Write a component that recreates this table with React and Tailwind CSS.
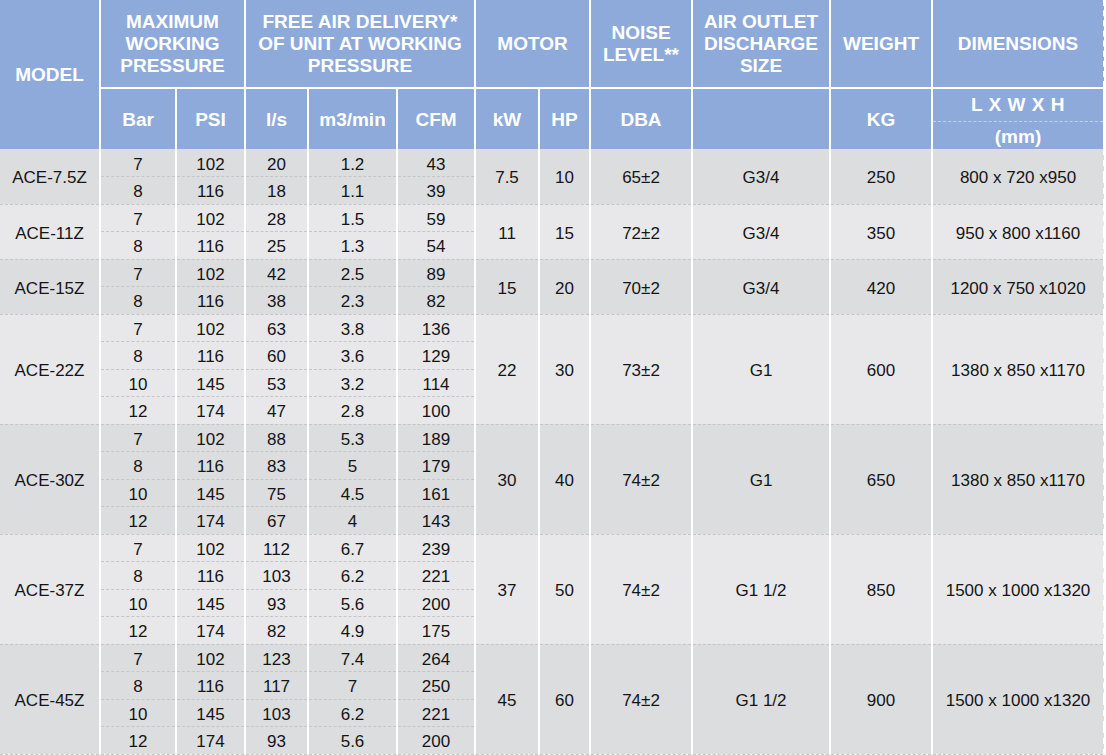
const groups = [
  { model: 'ACE-7.5Z', rows: [[7, 102, 20, '1.2', 43], [8, 116, 18, '1.1', 39]], kw: '7.5', hp: 10, dba: '65±2', size: 'G3/4', kg: 250, dim: '800 x 720 x950' },
  { model: 'ACE-11Z', rows: [[7, 102, 28, '1.5', 59], [8, 116, 25, '1.3', 54]], kw: 11, hp: 15, dba: '72±2', size: 'G3/4', kg: 350, dim: '950 x 800 x1160' },
  { model: 'ACE-15Z', rows: [[7, 102, 42, '2.5', 89], [8, 116, 38, '2.3', 82]], kw: 15, hp: 20, dba: '70±2', size: 'G3/4', kg: 420, dim: '1200 x 750 x1020' },
  { model: 'ACE-22Z', rows: [[7, 102, 63, '3.8', 136], [8, 116, 60, '3.6', 129], [10, 145, 53, '3.2', 114], [12, 174, 47, '2.8', 100]], kw: 22, hp: 30, dba: '73±2', size: 'G1', kg: 600, dim: '1380 x 850 x1170' },
  { model: 'ACE-30Z', rows: [[7, 102, 88, '5.3', 189], [8, 116, 83, '5', 179], [10, 145, 75, '4.5', 161], [12, 174, 67, '4', 143]], kw: 30, hp: 40, dba: '74±2', size: 'G1', kg: 650, dim: '1380 x 850 x1170' },
  { model: 'ACE-37Z', rows: [[7, 102, 112, '6.7', 239], [8, 116, 103, '6.2', 221], [10, 145, 93, '5.6', 200], [12, 174, 82, '4.9', 175]], kw: 37, hp: 50, dba: '74±2', size: 'G1 1/2', kg: 850, dim: '1500 x 1000 x1320' },
  { model: 'ACE-45Z', rows: [[7, 102, 123, '7.4', 264], [8, 116, 117, '7', 250], [10, 145, 103, '6.2', 221], [12, 174, 93, '5.6', 200]], kw: 45, hp: 60, dba: '74±2', size: 'G1 1/2', kg: 900, dim: '1500 x 1000 x1320' },
];

const widths = [100, 76, 69, 63, 89, 78, 64, 51, 102, 138, 102, 172];

const th = 'bg-[#8eaadb] text-white font-bold text-[19px] leading-[22px] text-center align-middle p-0 border-r-2 border-r-white';
const td = 'p-0 pt-[3px] text-center align-middle border-r-2 border-r-white border-b border-b-[#c6c6c6] [border-bottom-style:dashed]';

export default function App() {
  return (
    <div className="bg-white w-[1106px] h-[755px] overflow-hidden font-['Liberation_Sans',Arial,sans-serif]">
      <table className="table-fixed border-collapse w-[1104px]">
        <colgroup>
          {widths.map((w, i) => (
            <col key={i} style={{ width: w }} />
          ))}
        </colgroup>
        <thead>
          <tr className="h-[88px]">
            <th rowSpan={3} className={th}>MODEL</th>
            <th colSpan={2} className={`${th} border-b-2 border-b-white`}>MAXIMUM<br />WORKING<br />PRESSURE</th>
            <th colSpan={3} className={`${th} border-b-2 border-b-white`}>FREE AIR DELIVERY*<br />OF UNIT AT WORKING<br />PRESSURE</th>
            <th colSpan={2} className={`${th} border-b-2 border-b-white`}>MOTOR</th>
            <th className={`${th} border-b-2 border-b-white`}>NOISE<br />LEVEL**</th>
            <th className={`${th} border-b-2 border-b-white`}>AIR OUTLET<br />DISCHARGE<br />SIZE</th>
            <th className={`${th} border-b-2 border-b-white`}>WEIGHT</th>
            <th className={`${th} border-b-2 border-b-white border-r border-r-[#c6c6c6] [border-right-style:dashed]`}>DIMENSIONS</th>
          </tr>
          <tr className="h-[33px]">
            <th rowSpan={2} className={`${th} pt-[2px]`}>Bar</th>
            <th rowSpan={2} className={`${th} pt-[2px]`}>PSI</th>
            <th rowSpan={2} className={`${th} pt-[2px]`}>l/s</th>
            <th rowSpan={2} className={`${th} pt-[2px]`}>m3/min</th>
            <th rowSpan={2} className={`${th} pt-[2px]`}>CFM</th>
            <th rowSpan={2} className={`${th} pt-[2px]`}>kW</th>
            <th rowSpan={2} className={`${th} pt-[2px]`}>HP</th>
            <th rowSpan={2} className={`${th} pt-[2px]`}>DBA</th>
            <th rowSpan={2} className={th}></th>
            <th rowSpan={2} className={`${th} pt-[2px]`}>KG</th>
            <th className={`${th} tracking-[0.5px] border-b border-b-[#c3d0ec] [border-bottom-style:dashed]`}>L X W X H</th>
          </tr>
          <tr className="h-[28px]">
            <th className={`${th} pt-[3px]`}>(mm)</th>
          </tr>
        </thead>
        <tbody className="text-[17px] leading-none text-[#151515]">
          {groups.map((g, gi) => {
            const bg = gi % 2 === 0 ? 'bg-[#dcdddf]' : 'bg-[#e8e8ea]';
            const n = g.rows.length;
            return g.rows.map((r, i) => (
              <tr key={`${gi}-${i}`} className={`h-[27.5px] ${bg}`}>
                {i === 0 && <td rowSpan={n} className={td}>{g.model}</td>}
                {r.map((v, k) => (
                  <td key={k} className={td}>{v}</td>
                ))}
                {i === 0 && (
                  <>
                    <td rowSpan={n} className={td}>{g.kw}</td>
                    <td rowSpan={n} className={td}>{g.hp}</td>
                    <td rowSpan={n} className={td}>{g.dba}</td>
                    <td rowSpan={n} className={td}>{g.size}</td>
                    <td rowSpan={n} className={td}>{g.kg}</td>
                    <td rowSpan={n} className={`${td} border-r border-r-[#c6c6c6] [border-right-style:dashed]`}>{g.dim}</td>
                  </>
                )}
              </tr>
            ));
          })}
        </tbody>
      </table>
    </div>
  );
}
